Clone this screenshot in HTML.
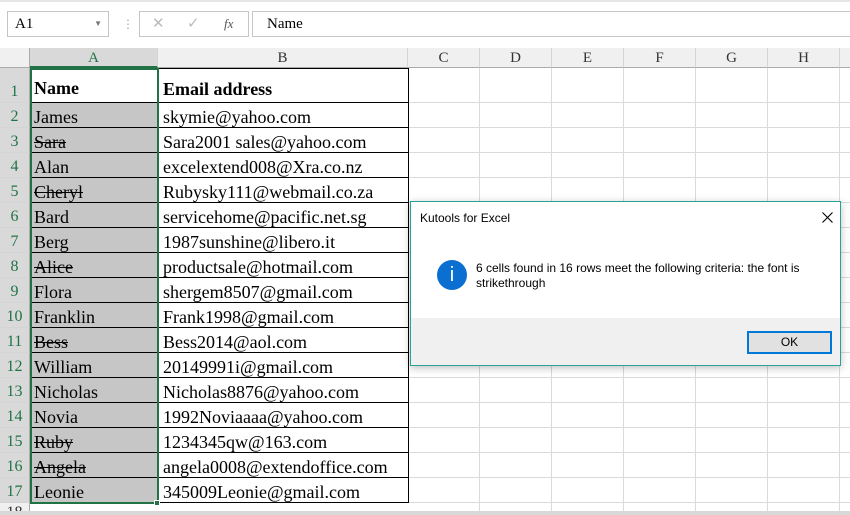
<!DOCTYPE html><html><head><style>
*{margin:0;padding:0;box-sizing:border-box}
body{width:850px;height:515px;background:#fff;position:relative;overflow:hidden;font-family:"Liberation Serif",serif}
.a{position:absolute}
.ui{font-family:"Liberation Sans",sans-serif}
.ch{position:absolute;top:48px;height:20px;background:#f0f0f0;border-right:1px solid #d4d4d4;border-bottom:1px solid #ababab;text-align:center;font-size:15px;line-height:20px;color:#333}
.rh{position:absolute;left:0;width:30px;background:#f0f0f0;border-bottom:1px solid #d4d4d4;border-right:1px solid #ababab;text-align:center;font-size:16px;color:#333}
.c{position:absolute;font-size:18px;padding-left:4px;white-space:nowrap;border-bottom:1px solid #000}
.s{text-decoration:line-through}
.gl{position:absolute;background:#dadada}
</style></head><body>
<div class="a" style="left:0;top:0;width:850px;height:2px;background:#e6e6e6"></div>
<div class="a ui" style="left:7px;top:11px;width:102px;height:26px;border:1px solid #c6c6c6;font-family:'Liberation Serif';font-size:15px;line-height:24px;padding-left:7px">A1<span style="position:absolute;right:6px;top:0;font-size:8px;color:#777">▼</span></div>
<div class="a" style="left:122px;top:17px;color:#aaa;font-size:12px">⋮</div>
<div class="a" style="left:139px;top:11px;width:110px;height:26px;border:1px solid #c6c6c6;font-family:'Liberation Sans';font-size:15px;line-height:24px;color:#bbb"><span class="a" style="left:12px">✕</span><span class="a" style="left:47px">✓</span><span class="a" style="left:84px;color:#555;font-style:italic;font-family:'Liberation Serif';font-size:13px">fx</span></div>
<div class="a" style="left:252px;top:11px;width:600px;height:26px;border:1px solid #c6c6c6;font-size:15px;line-height:24px;padding-left:14px">Name</div>
<div class="a" style="left:0;top:48px;width:30px;height:20px;background:#f0f0f0;border-right:1px solid #ababab;border-bottom:1px solid #ababab"></div>
<div class="ch" style="left:30px;width:128px;background:#d9d9d9;color:#217346;border-bottom:2px solid #217346">A</div>
<div class="ch" style="left:158px;width:250px">B</div>
<div class="ch" style="left:408px;width:72px">C</div>
<div class="ch" style="left:480px;width:72px">D</div>
<div class="ch" style="left:552px;width:72px">E</div>
<div class="ch" style="left:624px;width:72px">F</div>
<div class="ch" style="left:696px;width:72px">G</div>
<div class="ch" style="left:768px;width:72px">H</div>
<div class="ch" style="left:840px;width:10px;border-right:none"></div>
<div id="g"></div>
<div class="a" style="left:0;top:511px;width:850px;height:4px;background:#d8d8d8"></div>
<div class="a" style="left:30px;top:68px;width:129px;height:436px;border:2px solid #217346"></div>
<div class="a" style="left:154px;top:500px;width:6px;height:6px;background:#217346;border:1px solid #fff"></div>
<div class="a ui" style="left:410px;top:201px;width:431px;height:165px;background:#fff;border:1px solid #2aa198;box-shadow:0 2px 8px rgba(0,0,0,.25)">
<div class="a" style="left:9px;top:9px;font-size:12px;color:#000">Kutools for Excel</div>
<svg class="a" style="left:411px;top:10px" width="11" height="11" viewBox="0 0 11 11"><path d="M0.5 0.5L10.5 10.5M10.5 0.5L0.5 10.5" stroke="#000" stroke-width="1.1"/></svg>
<div class="a" style="left:26px;top:58px;width:30px;height:30px;border-radius:50%;background:#0a6fd0;color:#fff;text-align:center;font-size:20px;line-height:30px">i</div>
<div class="a" style="left:65px;top:59px;font-size:12px;line-height:15px;width:350px">6 cells found in 16 rows meet the following criteria: the font is strikethrough</div>
<div class="a" style="left:0;top:116px;width:429px;height:47px;background:#f0f0f0"></div>
<div class="a" style="left:336px;top:129px;width:85px;height:23px;border:2px solid #0078d7;background:#e1e1e1;text-align:center;font-size:12px;line-height:19px">OK</div>
</div>
<script>
var d=[["Name","Email address"],["James","skymie@yahoo.com"],["Sara","Sara2001 sales@yahoo.com",1],["Alan","excelextend008@Xra.co.nz"],["Cheryl","Rubysky111@webmail.co.za",1],["Bard","servicehome@pacific.net.sg"],["Berg","1987sunshine@libero.it"],["Alice","productsale@hotmail.com",1],["Flora","shergem8507@gmail.com"],["Franklin","Frank1998@gmail.com"],["Bess","Bess2014@aol.com",1],["William","20149991i@gmail.com"],["Nicholas","Nicholas8876@yahoo.com"],["Novia","1992Noviaaaa@yahoo.com"],["Ruby","1234345qw@163.com",1],["Angela","angela0008@extendoffice.com",1],["Leonie","345009Leonie@gmail.com"]];
var h="";
for(var x=479;x<850;x+=72)h+='<div class="gl" style="left:'+x+'px;top:68px;width:1px;height:445px"></div>';
for(var i=0;i<17;i++){var t=i==0?68:103+(i-1)*25,ht=i==0?35:25;
h+='<div class="gl" style="left:408px;top:'+(t+ht-1)+'px;width:442px;height:1px"></div>';
h+='<div class="rh" style="top:'+t+'px;height:'+ht+'px;line-height:'+(i==0?48:28)+'px;background:#d9d9d9;color:#217346">'+(i+1)+'</div>';
h+='<div class="c'+(d[i][2]?' s':'')+'" style="left:30px;top:'+t+'px;width:128px;height:'+ht+'px;line-height:'+(i==0?40:28)+'px;border-right:1px solid #000;background:'+(i?'#c6c6c6':'#fff')+(i==0?';font-weight:bold':'')+'">'+d[i][0]+'</div>';
h+='<div class="c" style="left:158px;top:'+t+'px;width:251px;height:'+ht+'px;line-height:'+(i==0?40:28)+'px;border-right:1px solid #000;border-left:1px solid #000'+(i==0?';font-weight:bold;border-top:1px solid #000':'')+'">'+d[i][1]+'</div>';}
h+='<div class="rh" style="top:503px;height:10px;line-height:20px;overflow:hidden">18</div>';
document.getElementById("g").innerHTML=h;
</script>
</body></html>
